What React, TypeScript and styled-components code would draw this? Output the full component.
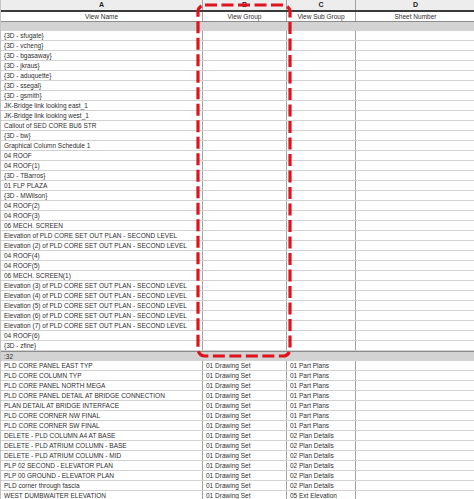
import React from "react";
import styled, { createGlobalStyle } from "styled-components";

const GlobalStyle = createGlobalStyle`
  html, body { margin: 0; padding: 0; background: #ffffff; overflow: hidden; }
  body { font-family: "Liberation Sans", Arial, sans-serif; }
`;

const COLS = "202px 84px 69px 119px";

const Sheet = styled.div`
  position: relative;
  width: 474px;
  height: 499px;
  overflow: hidden;
  border-left: 1px solid #c4c4c4;
  box-sizing: border-box;
`;

const Row = styled.div<{ $kind: "letters" | "title" | "band" | "data" }>`
  display: grid;
  grid-template-columns: ${COLS};
  box-sizing: border-box;
  height: ${(p) =>
    p.$kind === "letters" ? "12px" : p.$kind === "title" ? "9px" : "10px"};
  background: ${(p) =>
    p.$kind === "letters" ? "#ededed" : p.$kind === "band" ? "#d3d3d3" : "#ffffff"};
  border-bottom: ${(p) =>
    p.$kind === "letters"
      ? "2px solid #3c3c3c"
      : p.$kind === "data"
      ? "1px solid #d2d2d2"
      : "none"};
  border-top: ${(p) => (p.$kind === "band" ? "1px solid #8c8c8c" : "none")};
`;

const Cell = styled.div<{ $align?: "left" | "center"; $bold?: boolean; $last?: boolean }>`
  box-sizing: border-box;
  border-right: ${(p) => (p.$last ? "none" : "1px solid #a2a2a2")};
  padding: 0 3px;
  font-size: ${(p) => (p.$bold ? "7px" : "6.5px")};
  font-weight: ${(p) => (p.$bold ? 700 : 400)};
  line-height: 9px;
  color: ${(p) => (p.$bold ? "#222222" : "#2e2e2e")};
  text-align: ${(p) => p.$align ?? "left"};
  white-space: nowrap;
  overflow: hidden;
`;

const BandCell = styled.div`
  grid-column: 1 / -1;
  padding: 0 3px;
  font-size: 6.5px;
  line-height: 9px;
  color: #2e2e2e;
`;

const Highlight = styled.svg`
  position: absolute;
  left: 194px;
  top: 2px;
  pointer-events: none;
`;

const group1 = [
  "{3D - sfugate}",
  "{3D - vcheng}",
  "{3D - bgasaway}",
  "{3D - jkraus}",
  "{3D - aduquette}",
  "{3D - ssegal}",
  "{3D - gsmith}",
  "JK-Bridge link looking east_1",
  "JK-Bridge link looking west_1",
  "Callout of SED CORE BU6 STR",
  "{3D - bw}",
  "Graphical Column Schedule 1",
  "04 ROOF",
  "04 ROOF(1)",
  "{3D - TBarros}",
  "01 FLP PLAZA",
  "{3D - MWilson}",
  "04 ROOF(2)",
  "04 ROOF(3)",
  "06 MECH. SCREEN",
  "Elevation of PLD CORE SET OUT PLAN - SECOND LEVEL",
  "Elevation (2) of PLD CORE SET OUT PLAN - SECOND LEVEL",
  "04 ROOF(4)",
  "04 ROOF(5)",
  "06 MECH. SCREEN(1)",
  "Elevation (3) of PLD CORE SET OUT PLAN - SECOND LEVEL",
  "Elevation (4) of PLD CORE SET OUT PLAN - SECOND LEVEL",
  "Elevation (5) of PLD CORE SET OUT PLAN - SECOND LEVEL",
  "Elevation (6) of PLD CORE SET OUT PLAN - SECOND LEVEL",
  "Elevation (7) of PLD CORE SET OUT PLAN - SECOND LEVEL",
  "04 ROOF(6)",
  "{3D - zfine}",
];

const group2: [string, string, string][] = [
  ["PLD CORE PANEL EAST TYP", "01 Drawing Set", "01 Part Plans"],
  ["PLD CORE COLUMN TYP", "01 Drawing Set", "01 Part Plans"],
  ["PLD CORE PANEL NORTH MEGA", "01 Drawing Set", "01 Part Plans"],
  ["PLD CORE PANEL DETAIL AT BRIDGE CONNECTION", "01 Drawing Set", "01 Part Plans"],
  ["PLAN DETAIL AT BRIDGE INTERFACE", "01 Drawing Set", "01 Part Plans"],
  ["PLD CORE CORNER NW FINAL", "01 Drawing Set", "01 Part Plans"],
  ["PLD CORE CORNER SW FINAL", "01 Drawing Set", "01 Part Plans"],
  ["DELETE - PLD COLUMN A4 AT BASE", "01 Drawing Set", "02 Plan Details"],
  ["DELETE - PLD ATRIUM COLUMN - BASE", "01 Drawing Set", "02 Plan Details"],
  ["DELETE - PLD ATRIUM COLUMN - MID", "01 Drawing Set", "02 Plan Details"],
  ["PLP 02 SECOND - ELEVATOR PLAN", "01 Drawing Set", "02 Plan Details"],
  ["PLP 00 GROUND - ELEVATOR PLAN", "01 Drawing Set", "02 Plan Details"],
  ["PLD corner through fascia", "01 Drawing Set", "02 Plan Details"],
  ["WEST DUMBWAITER ELEVATION", "01 Drawing Set", "05 Ext Elevation"],
];

function DataRow({ a, b = "", c = "", d = "" }: { a: string; b?: string; c?: string; d?: string }) {
  return (
    <Row $kind="data">
      <Cell>{a}</Cell>
      <Cell>{b}</Cell>
      <Cell>{c}</Cell>
      <Cell $last>{d}</Cell>
    </Row>
  );
}

export default function App() {
  return (
    <>
      <GlobalStyle />
      <Sheet>
        <Row $kind="letters">
          <Cell $align="center" $bold>A</Cell>
          <Cell $align="center" $bold>B</Cell>
          <Cell $align="center" $bold>C</Cell>
          <Cell $align="center" $bold $last>D</Cell>
        </Row>
        <Row $kind="title">
          <Cell $align="center">View Name</Cell>
          <Cell $align="center">View Group</Cell>
          <Cell $align="center">View Sub Group</Cell>
          <Cell $align="center" $last>Sheet Number</Cell>
        </Row>
        <Row $kind="band">
          <BandCell />
        </Row>
        {group1.map((name, i) => (
          <DataRow key={"g1-" + i} a={name} />
        ))}
        <Row $kind="band">
          <BandCell>:32</BandCell>
        </Row>
        {group2.map(([a, b, c], i) => (
          <DataRow key={"g2-" + i} a={a} b={b} c={c} />
        ))}
        <Highlight width="98" height="358" viewBox="0 0 98 358">
          <rect
            x="3"
            y="3"
            width="92"
            height="351"
            rx="7"
            ry="7"
            fill="none"
            stroke="#e0121c"
            strokeWidth="3.2"
            strokeDasharray="12 4.5"
          />
        </Highlight>
      </Sheet>
    </>
  );
}
